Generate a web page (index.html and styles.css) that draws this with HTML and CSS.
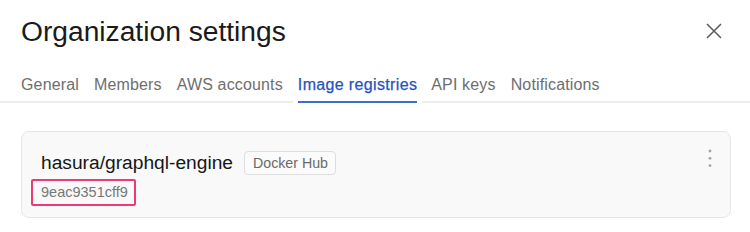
FILE: index.html
```html
<!DOCTYPE html>
<html lang="en">
<head>
  <meta charset="UTF-8" />
  <meta name="viewport" content="width=device-width, initial-scale=1.0"/>
  <title>Organization settings</title>
  <link rel="stylesheet" href="styles.css">
</head>
<body>
  <div class="header">
    <h1>Organization settings</h1>
    <button class="close" aria-label="Close">
      <svg width="16" height="16" viewBox="0 0 16 16"><path d="M1 1 L15 15 M15 1 L1 15" stroke="#5f5f5f" stroke-width="1.6" fill="none"/></svg>
    </button>
  </div>

  <div class="tabs">
    <a class="tab">General</a>
    <a class="tab">Members</a>
    <a class="tab">AWS accounts</a>
    <a class="tab active">Image registries</a>
    <a class="tab">API keys</a>
    <a class="tab">Notifications</a>
  </div>

  <div class="card">
    <div class="card-head">
      <span class="repo">hasura/graphql-engine</span>
      <span class="badge">Docker Hub</span>
      <button class="kebab" aria-label="More">
        <svg width="6" height="20" viewBox="0 0 6 20">
          <circle cx="3" cy="3" r="1.4" fill="#a3a3a3"/>
          <circle cx="3" cy="10.3" r="1.4" fill="#a3a3a3"/>
          <circle cx="3" cy="17.6" r="1.4" fill="#a3a3a3"/>
        </svg>
      </button>
    </div>
    <span class="hash">9eac9351cff9</span>
  </div>
</body>
</html>
```

FILE: styles.css
```css
body {
  font-family: 'Liberation Sans', Arial, sans-serif;
  margin: 0;
  background: #fff;
  color: #1a1a1a;
}
.header {
  display: flex;
  align-items: center;
  justify-content: space-between;
  padding: 0 24px 0 21px;
}
h1 {
  font-size: 28.2px;
  font-weight: 400;
  line-height: 34px;
  margin: 14px 0 0;
}
.close {
  border: none;
  background: none;
  padding: 0;
  width: 24px;
  height: 24px;
  display: flex;
  align-items: center;
  justify-content: center;
  margin-top: 14px;
}
.tabs {
  display: flex;
  gap: 15px;
  margin-top: 27px;
  padding: 0 21px;
  border-bottom: 2px solid #ececec;
}
.tab {
  font-size: 16px;
  line-height: 20px;
  letter-spacing: 0.15px;
  color: #6e6e6e;
  padding-bottom: 6px;
  margin-bottom: -2px;
  border-bottom: 2px solid transparent;
}
.tab.active {
  color: #2652c2;
  letter-spacing: 0.35px;
  -webkit-text-stroke: 0.25px #2652c2;
  margin-right: -1px;
  border-bottom-color: #3e6bd5;
  box-shadow: 5px 0 0 #fff, -5px 0 0 #fff;
}
.card {
  margin: 28px 19px 0 21px;
  background: #f9f9f9;
  border: 1px solid #e6e6e6;
  border-radius: 8px;
  padding: 19px 17px 11px 19px;
}
.card-head {
  display: flex;
  align-items: center;
  height: 24px;
}
.repo {
  font-size: 19.2px;
  line-height: 24px;
  color: #161616;
}
.badge {
  margin-left: 11px;
  font-size: 14.2px;
  line-height: 22px;
  padding: 0 7px 0 8px;
  color: #6a6a6a;
  background: #fbfbfb;
  border: 1px solid #dedede;
  border-radius: 4px;
}
.kebab {
  margin-left: auto;
  align-self: flex-start;
  margin-top: -3px;
  border: none;
  background: none;
  padding: 0;
  display: flex;
}
.hash {
  display: inline-block;
  margin-top: 4px;
  margin-left: -10px;
  font-size: 14.5px;
  line-height: 17px;
  color: #777;
  padding: 3px 6px 3px 8px;
  border: 2px solid #ee3a72;
  border-radius: 2px;
}
```
